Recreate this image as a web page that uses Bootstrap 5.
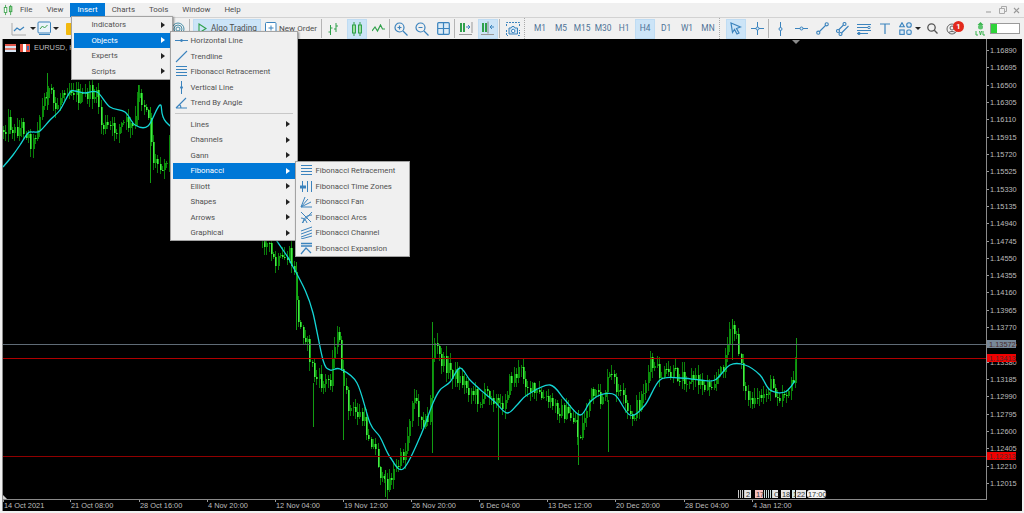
<!DOCTYPE html>
<html lang="en">
<head>
  <meta charset="UTF-8" />
  <meta name="viewport" content="width=device-width, initial-scale=1.0"/>
  <title>MetaTrader 5</title>
  <link href="https://cdn.jsdelivr.net/npm/bootstrap@5.3.3/dist/css/bootstrap.min.css" rel="stylesheet">
  <style>
    html, body { height: 513px; overflow: hidden; }
    body { background: #f0f0f0; font-family: Roboto, "Noto Sans", sans-serif; font-size: 7.9px; color: #4d4d4d; position: relative; border-top: 3px solid #fff; }
    svg { display: block; flex: none; }

    /* menu bar */
    .menu-row { height: 14px; line-height: 13px; font-size: 7.9px; }
    .menu-logo { width: 13px; padding-left: 3px; }
    .menu-name { padding: 0 7px; height: 14px; }
    .menu-name.on { background: #0078d7; color: #fff; }
    .win-ctl { margin-left: auto; width: 34px; margin-right: 4px; color: #999; }

    /* toolbar */
    .tool-row { height: 22px; border-top: 1px solid #d2d2d2; padding-left: 9px; }
    .tb-btn { width: 20px; height: 20px; margin-right: 1px; font-size: 8.4px; color: #4f7397; white-space: nowrap; }
    .tb-btn.on { background: #cce4f7; border: 1px solid #bfdcf3; }
    .tb-caret { width: 8px; }
    .tb-caret i { border: 3px solid transparent; border-top: 3px solid #222; margin-top: 3px; }
    .tb-sep { width: 1px; height: 19px; background: #b4b4b4; margin-right: 1px; }
    .tb-dots { width: 1px; height: 21px; border-left: 1px dotted #aaa; margin-right: 1px; }
    .tb-gap-hidden { width: 87px; }
    .algo-btn { width: 68px; height: 20px; margin-left: 2px; background: #cce4f7; border: 1px solid #bfdcf3; padding-left: 4px; gap: 4px; font-size: 8.2px; white-space: nowrap; }
    .order-btn { width: 59px; margin-left: 1px; padding-left: 3px; gap: 2px; font-size: 8.1px; white-space: nowrap; }
    .sp-1 { margin-left: 1px; } .sp-2 { margin-left: 2px; } .sp-3 { margin-left: 3px; } .sp-4 { margin-left: 4px; } .sp-5 { margin-left: 5px; } .sp-8 { margin-left: 8px; }
    .shapes-btn { width: 18px; }
    .lvl-btn { width: 20px; }
    .batt-box { width: 30px; height: 11px; background: #fff; border: 1px solid #9a9a9a; }
    .batt-fill { width: 6px; background: #2fd43a; }
    .bell-badge { position: absolute; left: 953px; top: 18px; width: 11px; height: 11px; background: #e2291c; color: #fff; border-radius: 50%; font-size: 7.5px; line-height: 11px; text-align: center; font-weight: 700; }

    /* chart */
    .chart-wrap { padding: 0 2px 2px 2px; }
    .chart-svg { background: #000; }
    .chart-svg text { font-family: "Liberation Sans", Arial, sans-serif; font-size: 7.4px; fill: #bdbdbd; }

    /* context menus */
    .mt-menu { position: absolute; display: block; background: #f0f0f0; border: 1px solid #a3a3a3; border-radius: 0; padding: 0 2px; margin: 0; min-width: 0; box-shadow: 1px 1px 2px rgba(0,0,0,.45); color: #4d4d4d; }
    .mt-menu .dropdown-item { height: 15.5px; line-height: 15px; padding: 0 0 0 17.5px; font-size: 7.8px; color: #505050; position: relative; }
    .mt-menu .dropdown-item.active { background: #0078d7; color: #fff; }
    .mt-menu .dropdown-divider { margin: 2.7px 2px 2.8px 2px; border-color: #c8c8c8; opacity: 1; }
    .mt-menu .has-sub::after { content: ""; position: absolute; right: 5px; top: 4.5px; border: 3px solid transparent; border-left: 4px solid #222; border-right: 0; }
    .mt-menu .has-sub.active::after { border-left-color: #fff; }
    .item-icon { position: absolute; left: 2px; top: 1px; }
    .menu-insert { left: 71px; top: 13px; width: 102px; height: 64px; z-index: 3; }
    .menu-objects { left: 170px; top: 28px; width: 128px; height: 210px; z-index: 4; padding-top: 1px; }
    .menu-fib { left: 295px; top: 158px; width: 115px; height: 96px; z-index: 5; padding-top: 1px; }
  </style>
</head>
<body>

<!-- menu bar -->
<div class="menu-row d-flex align-items-center">
  <div class="menu-logo">
    <svg width="11" height="12" viewBox="0 0 13 12"><path d="M3 0v12M9 0v12" stroke="#3aa14a"/><rect x="1.5" y="3" width="3" height="6" fill="#fff" stroke="#3aa14a"/><rect x="7.500" y="2" width="3" height="6" fill="#8ed08e" stroke="#3aa14a"/></svg>
  </div>
  <div class="menu-name">File</div>
  <div class="menu-name">View</div>
  <div class="menu-name on">Insert</div>
  <div class="menu-name">Charts</div>
  <div class="menu-name">Tools</div>
  <div class="menu-name">Window</div>
  <div class="menu-name">Help</div>
  <div class="win-ctl d-flex justify-content-between align-items-center">
    <svg width="6" height="6" viewBox="0 0 6 6"><path d="M0 5h5" stroke="#999"/></svg>
    <svg width="8" height="8" viewBox="0 0 8 8"><path d="M2.500 2.500v-2h5v5h-2M.5 2.500h5v5h-5z" fill="none" stroke="#aaa"/></svg>
    <svg width="7" height="7" viewBox="0 0 7 7"><path d="M1 1l5 5M6 1l-5 5" stroke="#999" stroke-width="1.200"/></svg>
  </div>
</div>

<!-- toolbar -->
<div class="tool-row d-flex align-items-center">
  <div class="tb-btn d-flex align-items-center justify-content-center m-0">
    <svg width="16" height="14" viewBox="0 0 16 14"><path d="M1 1v12h14" stroke="#aaa" fill="none"/><path d="M3 9l3-3 3 2 4-3" stroke="#3b83bd" fill="none" stroke-width="1.200"/></svg>
  </div>
  <div class="tb-caret d-flex justify-content-center"><i></i></div>
  <div class="d-flex align-items-center justify-content-center">
    <svg width="15" height="15" viewBox="0 0 15 15"><rect x="1" y="1" width="12.500" height="11" rx="1" fill="#eaf3fa" stroke="#3b83bd"/><path d="M3 8l2.500-3 2 2 3-3" stroke="#3aa14a" fill="none"/><path d="M2 13.500h11" stroke="#3b83bd"/></svg>
  </div>
  <div class="tb-caret d-flex justify-content-center"><i></i></div>
  <div class="tb-btn d-flex align-items-center justify-content-center">
    <svg width="8" height="14" viewBox="0 0 8 14"><rect x="0" y="1" width="8" height="12" rx="1" fill="#f2b90f"/></svg>
  </div>
  <div class="tb-gap-hidden"></div>
  <div class="tb-btn d-flex align-items-center justify-content-center">
    <svg width="14" height="14" viewBox="0 0 14 14" fill="none" stroke="#4a8fa8"><circle cx="7" cy="7" r="6"/><circle cx="7" cy="7" r="4"/><circle cx="7" cy="7" r="2"/></svg>
  </div>
  <div class="tb-sep"></div>
  <div class="algo-btn d-flex align-items-center">
    <svg width="9" height="11" viewBox="0 0 9 11"><path d="M1 1l7 4.500-7 4.500z" fill="none" stroke="#2fa04a" stroke-width="1.100"/></svg>
    <span>Algo Trading</span>
  </div>
  <div class="order-btn d-flex align-items-center">
    <svg width="12" height="13" viewBox="0 0 12 13"><rect x=".5" y=".5" width="10.500" height="12" rx="1" fill="#fff" stroke="#3b83bd"/><path d="M6 3.500v5M3.500 6h5" stroke="#3b83bd"/></svg>
    <span>New Order</span>
  </div>
  <div class="tb-sep"></div>
  <div class="tb-btn d-flex align-items-center justify-content-center">
    <svg width="11" height="14" viewBox="0 0 11 14" stroke="#2fa04a" fill="none"><path d="M2.500 3v10M.5 10h2M2.500 6h2M8 1v9M6 7h2M8 4h2"/></svg>
  </div>
  <div class="tb-btn on sp-3 d-flex align-items-center justify-content-center">
    <svg width="12" height="14" viewBox="0 0 12 14" stroke="#2fa04a"><path d="M3 0v14M9 0v14"/><rect x="1.500" y="3" width="3" height="8" fill="#9fdca0"/><rect x="7.500" y="3" width="3" height="8" fill="#9fdca0"/></svg>
  </div>
  <div class="tb-btn d-flex align-items-center justify-content-center">
    <svg width="13" height="9" viewBox="0 0 13 9"><path d="M0 7l3-4 2.500 4 3-6 2 4h2.500" stroke="#2fa04a" fill="none" stroke-width="1.200"/></svg>
  </div>
  <div class="tb-sep"></div>
  <div class="tb-btn d-flex align-items-center justify-content-center">
    <svg width="14" height="14" viewBox="0 0 14 14" fill="none" stroke="#3b83bd" stroke-width="1.200"><circle cx="5.500" cy="5.500" r="4.500"/><path d="M9 9l4.500 4.500M3.500 5.500h4M5.500 3.500v4"/></svg>
  </div>
  <div class="tb-btn d-flex align-items-center justify-content-center">
    <svg width="14" height="14" viewBox="0 0 14 14" fill="none" stroke="#3b83bd" stroke-width="1.200"><circle cx="5.500" cy="5.500" r="4.500"/><path d="M9 9l4.500 4.500M3.500 5.500h4"/></svg>
  </div>
  <div class="tb-btn d-flex align-items-center justify-content-center">
    <svg width="13" height="13" viewBox="0 0 13 13" fill="#dcebf6" stroke="#3b83bd" stroke-width="1.200"><rect x=".7" y=".7" width="11.600" height="11.600" rx="1"/><path d="M6.500 1v11M1 6.500h11"/></svg>
  </div>
  <div class="tb-sep"></div>
  <div class="tb-btn d-flex align-items-center justify-content-center">
    <svg width="14" height="15" viewBox="0 0 14 15"><path d="M2 2v9M5 2v9" stroke="#2fa04a" stroke-width="2"/><path d="M7 6h4M9 4l2 2-2 2" stroke="#3b83bd" fill="none"/><path d="M13 1v11M0 13.500h13" stroke="#999"/></svg>
  </div>
  <div class="tb-btn on sp-1 d-flex align-items-center justify-content-center">
    <svg width="14" height="15" viewBox="0 0 14 15"><path d="M2 2v9M5 2v9" stroke="#2fa04a" stroke-width="2"/><path d="M7 .5v12" stroke="#888"/><path d="M13 6H9M11 4L9 6l2 2" stroke="#3b83bd" fill="none"/><path d="M0 13.500h13" stroke="#999"/></svg>
  </div>
  <div class="tb-sep"></div>
  <div class="tb-btn sp-2 d-flex align-items-center justify-content-center">
    <svg width="14" height="14" viewBox="0 0 14 14" fill="none" stroke="#3b83bd"><path d="M.5 4V.5h13V4M.5 8v5.500h1.500M12 13.500h1.500V8" stroke-dasharray="2 1"/><path d="M3 6h2l1-1.500h2L9 6h2.500v6H3z" fill="#cfe3f3"/><circle cx="7.200" cy="9" r="1.700" fill="#fff"/></svg>
  </div>
  <div class="tb-dots"></div>
  <div class="tb-btn sp-4 d-flex align-items-center justify-content-center">M1</div>
  <div class="tb-btn d-flex align-items-center justify-content-center">M5</div>
  <div class="tb-btn d-flex align-items-center justify-content-center">M15</div>
  <div class="tb-btn d-flex align-items-center justify-content-center">M30</div>
  <div class="tb-btn d-flex align-items-center justify-content-center">H1</div>
  <div class="tb-btn on d-flex align-items-center justify-content-center">H4</div>
  <div class="tb-btn d-flex align-items-center justify-content-center">D1</div>
  <div class="tb-btn d-flex align-items-center justify-content-center">W1</div>
  <div class="tb-btn d-flex align-items-center justify-content-center">MN</div>
  <div class="tb-dots"></div>
  <div class="tb-btn on sp-5 d-flex align-items-center justify-content-center">
    <svg width="12" height="13" viewBox="0 0 12 13"><path d="M1 1l9.500 4-4 1.500L9 11l-2 1-2.500-4.500-2 3z" fill="none" stroke="#3b83bd" stroke-width="1.200"/></svg>
  </div>
  <div class="tb-btn d-flex align-items-center justify-content-center">
    <svg width="13" height="13" viewBox="0 0 13 13" fill="none" stroke="#3b83bd"><path d="M6.500 0v13M0 6.500h13"/><circle cx="6.500" cy="6.500" r="1.500" fill="#dcebf6"/></svg>
  </div>
  <div class="tb-sep"></div>
  <div class="tb-btn d-flex align-items-center justify-content-center">
    <svg width="5" height="14" viewBox="0 0 5 14" fill="none" stroke="#3b83bd"><path d="M2.500 0v14"/><circle cx="2.500" cy="7" r="1.500" fill="#dcebf6"/></svg>
  </div>
  <div class="tb-btn d-flex align-items-center justify-content-center">
    <svg width="13" height="5" viewBox="0 0 13 5" fill="none" stroke="#3b83bd"><path d="M0 2.500h13"/><circle cx="6.500" cy="2.500" r="1.500" fill="#dcebf6"/></svg>
  </div>
  <div class="tb-btn d-flex align-items-center justify-content-center">
    <svg width="13" height="13" viewBox="0 0 13 13" fill="none" stroke="#3b83bd" stroke-width="1.100"><path d="M3 10l7-7"/><circle cx="2.300" cy="10.700" r="1.600"/><circle cx="10.700" cy="2.300" r="1.600"/></svg>
  </div>
  <div class="tb-btn d-flex align-items-center justify-content-center">
    <svg width="14" height="14" viewBox="0 0 14 14" fill="none" stroke="#3b83bd" stroke-width="1.100"><path d="M2.500 8l5-5M5.500 11l7-7"/><circle cx="2" cy="9" r="1.500"/><circle cx="8.500" cy="2" r="1.500"/><circle cx="4.500" cy="12" r="1.500"/></svg>
  </div>
  <div class="tb-btn d-flex align-items-center justify-content-center">
    <svg width="14" height="12" viewBox="0 0 14 12" fill="none" stroke="#3b83bd"><path d="M0 1.500h14M0 4.500h11M0 7.500h14M0 10.500h11"/><circle cx="12" cy="4.500" r="1.200"/><circle cx="2" cy="10.500" r="1.200"/></svg>
  </div>
  <div class="tb-btn d-flex align-items-center justify-content-center">
    <svg width="10" height="11" viewBox="0 0 10 11" fill="none" stroke="#3b83bd" stroke-width="1.200"><path d="M0 1h10M5 1v10"/></svg>
  </div>
  <div class="shapes-btn d-flex align-items-center justify-content-center">
    <svg width="13" height="13" viewBox="0 0 13 13" fill="#dcebf6" stroke="#3b83bd" stroke-width="1.100"><path d="M3 .7l2.300 4H.7z"/><circle cx="10" cy="3" r="2.300"/><rect x=".8" y="8" width="4.400" height="4.400"/><rect x="7.800" y="8" width="4.400" height="4.400" rx="1.500"/></svg>
  </div>
  <div class="tb-caret d-flex justify-content-center"><i></i></div>
  <div class="tb-btn d-flex align-items-center justify-content-center m-0">
    <svg width="11" height="11" viewBox="0 0 11 11" fill="none" stroke="#555" stroke-width="1.300"><circle cx="4.500" cy="4.500" r="3.700"/><path d="M7.300 7.300l3.200 3.200"/></svg>
  </div>
  <div class="tb-btn d-flex align-items-center justify-content-center m-0">
    <svg width="12" height="12" viewBox="0 0 12 12" fill="none" stroke="#666"><circle cx="6" cy="6" r="5"/><circle cx="6" cy="5" r="2"/><path d="M2.500 10c1-2 6-2 7 0"/></svg>
  </div>
  <div class="lvl-btn sp-8 d-flex align-items-center justify-content-center">
    <svg width="11" height="14" viewBox="0 0 11 14"><path d="M5.500 0l3 3h-2v2h-2v-2h-2z" fill="#35b24a"/><circle cx="5.500" cy="5" r="2.500" fill="#5cc46e"/><path d="M1 9v4h2M4.500 9l1 4 1-4M8 9v4h2" fill="none" stroke="#35b24a"/></svg>
  </div>
  <div class="batt-box d-flex"><div class="batt-fill"></div></div>
</div>
<div class="bell-badge">1</div>

<!-- chart -->
<div class="chart-wrap">
  <svg id="chart" class="chart-svg" width="1020" height="472" viewBox="2 39 1020 472"></svg>
</div>

<!-- Insert menu -->
<div class="dropdown-menu show mt-menu menu-insert">
  <a class="dropdown-item has-sub">Indicators</a>
  <a class="dropdown-item has-sub active">Objects</a>
  <a class="dropdown-item has-sub">Experts</a>
  <a class="dropdown-item has-sub">Scripts</a>
</div>

<!-- Objects submenu -->
<div class="dropdown-menu show mt-menu menu-objects">
  <a class="dropdown-item">
    <svg class="item-icon" width="13" height="13" viewBox="0 0 13 13" fill="none" stroke="#3b83bd"><path d="M0 6.500h13"/><circle cx="6.500" cy="6.500" r="1" fill="#3b83bd"/></svg>Horizontal Line</a>
  <a class="dropdown-item">
    <svg class="item-icon" width="13" height="13" viewBox="0 0 13 13" fill="none" stroke="#3b83bd" stroke-width="1.100"><path d="M1 12L12 1"/></svg>Trendline</a>
  <a class="dropdown-item">
    <svg class="item-icon" width="13" height="13" viewBox="0 0 13 13" fill="none" stroke="#3b83bd"><path d="M1 1.500h11M1 4.500h11M1 7.500h11M1 10.500h11"/></svg>Fibonacci Retracement</a>
  <a class="dropdown-item">
    <svg class="item-icon" width="13" height="13" viewBox="0 0 13 13" fill="none" stroke="#3b83bd"><path d="M6.500 0v13"/><circle cx="6.500" cy="6.500" r="1" fill="#3b83bd"/></svg>Vertical Line</a>
  <a class="dropdown-item">
    <svg class="item-icon" width="13" height="13" viewBox="0 0 13 13" fill="none" stroke="#3b83bd" stroke-width="1.100"><path d="M1 12L11 2M1 12h11M6 12c0-2-1-3-1.500-3.500"/></svg>Trend By Angle</a>
  <div class="dropdown-divider"></div>
  <a class="dropdown-item has-sub">Lines</a>
  <a class="dropdown-item has-sub">Channels</a>
  <a class="dropdown-item has-sub">Gann</a>
  <a class="dropdown-item has-sub active">Fibonacci</a>
  <a class="dropdown-item has-sub">Elliott</a>
  <a class="dropdown-item has-sub">Shapes</a>
  <a class="dropdown-item has-sub">Arrows</a>
  <a class="dropdown-item has-sub">Graphical</a>
</div>

<!-- Fibonacci submenu -->
<div class="dropdown-menu show mt-menu menu-fib">
  <a class="dropdown-item">
    <svg class="item-icon" width="13" height="13" viewBox="0 0 13 13" fill="none" stroke="#3b83bd"><path d="M1 1.500h11M1 4.500h11M1 7.500h11M1 10.500h11"/></svg>Fibonacci Retracement</a>
  <a class="dropdown-item">
    <svg class="item-icon" width="13" height="13" viewBox="0 0 13 13" fill="none" stroke="#3b83bd"><path d="M2.500 1v11M7.500 1v11M11.500 1v11"/><path d="M0 7h6" stroke-width="3"/></svg>Fibonacci Time Zones</a>
  <a class="dropdown-item">
    <svg class="item-icon" width="13" height="13" viewBox="0 0 13 13" fill="none" stroke="#3b83bd"><path d="M1 12l4-10M1 12l7-8M1 12l10-5M1 12h11"/></svg>Fibonacci Fan</a>
  <a class="dropdown-item">
    <svg class="item-icon" width="13" height="13" viewBox="0 0 13 13" fill="none" stroke="#3b83bd"><path d="M1 1l10 10M12 1L2 12M3 12c0-4 3-8 9-8M1 7c3 0 5 2 6 5"/></svg>Fibonacci Arcs</a>
  <a class="dropdown-item">
    <svg class="item-icon" width="13" height="13" viewBox="0 0 13 13" fill="none" stroke="#3b83bd"><path d="M1 5l11-4M1 8l11-4M1 11l11-4M1 13l11-3"/></svg>Fibonacci Channel</a>
  <a class="dropdown-item">
    <svg class="item-icon" width="13" height="13" viewBox="0 0 13 13" fill="none" stroke="#3b83bd"><path d="M1 1.500h11M1 4h11" stroke-width="1.500"/><path d="M1 12l5-6 5 5" stroke-width="1.200"/></svg>Fibonacci Expansion</a>
</div>

<script>
  // chart drawn from points read off the screenshot
  const ns = "http://www.w3.org/2000/svg";
  const chart = document.getElementById("chart");

  function add(tag, attrs, text) {
    const el = document.createElementNS(ns, tag);
    for (const k in attrs) el.setAttribute(k, attrs[k]);
    if (text) el.textContent = text;
    chart.appendChild(el);
    return el;
  }

  // small seeded random so the picture is the same each time
  let seed = 12345;
  function rnd() { seed = (seed * 1103515245 + 12345) & 0x7fffffff; return seed / 0x7fffffff; }

  const pricePath = [[3,130],[8,122],[15,132],[22,125],[32,145],[38,120],[47,88],[55,110],[63,88],[72,88],[80,100],[90,92],[98,100],[100,125],[115,130],[125,122],[133,130],[138,95],[148,110],[152,160],[165,165],[170,130],[185,110],[200,125],[215,140],[230,160],[245,190],[262,235],[275,265],[290,255],[295,285],[298,325],[305,335],[310,360],[315,378],[322,385],[330,378],[335,335],[340,345],[343,390],[350,410],[360,415],[367,432],[375,450],[383,488],[395,470],[405,450],[412,395],[420,415],[428,425],[433,340],[440,360],[450,370],[465,385],[480,400],[490,390],[500,410],[510,380],[520,370],[530,390],[545,400],[560,410],[575,420],[578,440],[590,395],[600,400],[610,375],[620,395],[630,420],[640,400],[650,365],[660,375],[670,375],[680,375],[695,380],[705,385],[720,375],[732,325],[740,355],[745,395],[755,405],[770,385],[780,395],[793,385],[796,345]];
  const maPath = [[3,167],[13,155],[20,145],[28,133],[33,132],[40,131],[50,120],[60,110],[70,92],[75,91],[85,93],[97,92],[110,107],[125,112],[135,125],[148,126],[160,105],[166,122],[200,150],[240,190],[283,250],[292,265],[305,290],[313,313],[323,360],[330,370],[340,369],[357,383],[370,423],[380,437],[390,457],[403,469],[420,437],[433,403],[440,390],[450,382],[460,368],[470,380],[483,392],[495,402],[507,413],[517,405],[527,395],[550,385],[565,400],[580,415],[590,402],[600,395],[615,395],[630,415],[645,405],[660,380],[680,378],[700,380],[715,380],[730,365],[745,365],[760,375],[770,390],[785,392],[795,381]];
  const longWicks = [[47,73,110],[150,107,183],[313,383,427],[343,373,440],[432,322,453],[385,470,497],[498,400,460],[578,410,465],[608,400,452],[732,319,360],[796,338,380],[138,85,120],[296,262,330]];

  function at(path, x) {
    for (let i = 1; i < path.length; i++) {
      if (x <= path[i][0]) {
        const a = path[i-1], b = path[i];
        return a[1] + (b[1]-a[1]) * (x-a[0]) / (b[0]-a[0]);
      }
    }
    return path[path.length-1][1];
  }

  // catmull-rom to bezier, the average should not look angular
  function smooth(p) {
    let d = "M" + p[0].join(" ");
    for (let i = 0; i < p.length - 1; i++) {
      const a = p[Math.max(i-1, 0)], b = p[i], c = p[i+1], e = p[Math.min(i+2, p.length-1)];
      d += " C" + (b[0]+(c[0]-a[0])/6).toFixed(1) + " " + (b[1]+(c[1]-a[1])/6).toFixed(1) + " " +
        (c[0]-(e[0]-b[0])/6).toFixed(1) + " " + (c[1]-(e[1]-b[1])/6).toFixed(1) + " " + c[0] + " " + c[1];
    }
    return d;
  }

  // price axis and time axis
  const levels = ["1.16890","1.16695","1.16500","1.16305","1.16110","1.15915","1.15720","1.15525","1.15330","1.15135","1.14940","1.14745","1.14550","1.14355","1.14160","1.13965","1.13770","1.13575","1.13380","1.13185","1.12990","1.12795","1.12600","1.12405","1.12210","1.12015"];
  levels.forEach((p, i) => {
    const y = Math.round(50 + 17.32 * i);
    add("rect", {x: 986, y: y, width: 3, height: 1, fill: "#9a9a9a"});
    add("text", {x: 990, y: y + 3}, p);
  });
  const times = [[3,"14 Oct 2021"],[70,"21 Oct 08:00"],[139,"28 Oct 16:00"],[207,"4 Nov 20:00"],[275,"12 Nov 04:00"],[343,"19 Nov 12:00"],[411,"26 Nov 20:00"],[479,"6 Dec 04:00"],[547,"13 Dec 12:00"],[615,"20 Dec 20:00"],[684,"28 Dec 04:00"],[752,"4 Jan 12:00"]];
  times.forEach(t => {
    add("rect", {x: t[0], y: 499, width: 1, height: 3, fill: "#9a9a9a"});
    add("text", {x: t[0] + 1, y: 508}, t[1]);
  });
  add("rect", {x: 986, y: 39, width: 1, height: 461, fill: "#8a8a8a"});
  add("rect", {x: 3, y: 499, width: 984, height: 1, fill: "#8a8a8a"});
  add("rect", {x: 2, y: 39, width: 1, height: 472, fill: "#8a8a8a"});

  // candles
  const g = add("g", {"shape-rendering": "crispEdges"});
  function bar(x, y1, y2, w, fill) {
    const r = document.createElementNS(ns, "rect");
    r.setAttribute("x", x); r.setAttribute("y", Math.min(y1, y2));
    r.setAttribute("width", w); r.setAttribute("height", Math.max(1, Math.abs(y2-y1)));
    r.setAttribute("fill", fill);
    g.appendChild(r);
  }
  let prev = at(pricePath, 3);
  for (let x = 3; x < 797; x += 2.27) {
    const px = Math.round(x);
    const close = at(pricePath, x) + (rnd()-.5) * 16;
    const top = Math.min(prev, close), bot = Math.max(prev, close);
    bar(px, top - 1 - rnd()*9, bot + 1 + rnd()*9, 1, "#0a7f0a");
    const up = close < prev;
    bar(px, top, bot, 2, up ? "#0b8f0b" : "#16ad16");
    if (!up) bar(px, top, bot, 1, "#4ae84a");
    prev = close;
  }
  longWicks.forEach(w => bar(w[0], w[1], w[2], 1, "#129c12"));

  // moving average
  add("path", {d: smooth(maPath), fill: "none", stroke: "#14d6d6", "stroke-width": 1.300, "stroke-linejoin": "round"});

  // horizontal levels
  add("rect", {x: 3, y: 344, width: 983, height: 1, fill: "#5f6b76"});
  add("rect", {x: 3, y: 358, width: 983, height: 1, fill: "#b00000"});
  add("rect", {x: 3, y: 456, width: 983, height: 1, fill: "#900000"});
  [[344,"1.13572","#778899"],[358,"1.13413","#f00000"],[456,"1.12313","#f00000"]].forEach(l => {
    add("rect", {x: 987, y: l[0]-4, width: 29, height: 8, fill: l[2]});
    add("text", {x: 989, y: l[0]+3, style: "fill:#4a2a2a"}, l[1]);
  });

  // symbol caption and flags
  add("rect", {x: 5, y: 44, width: 11, height: 8, fill: "#d9e4f2"});
  add("rect", {x: 5, y: 44, width: 11, height: 2, fill: "#e0564a"});
  add("rect", {x: 5, y: 48, width: 11, height: 2, fill: "#e07a6e"});
  add("rect", {x: 20, y: 44, width: 10, height: 8, fill: "#e8523f"});
  add("rect", {x: 23, y: 44, width: 3, height: 8, fill: "#fff"});
  add("rect", {x: 27, y: 46, width: 2, height: 4, fill: "#3a6fb5"});
  add("text", {x: 34, y: 50}, "EURUSD, H4");
  add("path", {d: "M792 40h8l-4 4z", fill: "#8a8a8a"});
  add("path", {d: "M3 499v-4l4 4z", fill: "#cfcfcf"});

  // separator flags along the bottom
  for (let x = 738; x < 745; x += 2) add("rect", {x: x, y: 490, width: 1, height: 8, fill: "#c8c8c8"});
  for (let x = 764; x < 773; x += 2) add("rect", {x: x, y: 490, width: 1, height: 8, fill: "#c8d8d8"});
  [[745,6,"2","#e6e6e6"],[755,8,"17","#f4c0c0"],[773,5,"C","#e6e6e6"],[781,9,"18","#e6e6e6"],[792,3,"1","#cfe8e8"],[796,10,"22","#e6e6e6"],[807,19,"17:00","#f4f4f4"]].forEach(f => {
    add("rect", {x: f[0], y: 490, width: f[1], height: 8, fill: f[3], rx: f[1] > 12 ? 3 : 0});
    add("text", {x: f[0] + 1, y: 497, style: "fill:#333"}, f[2]);
  });
</script>
</body>
</html>
